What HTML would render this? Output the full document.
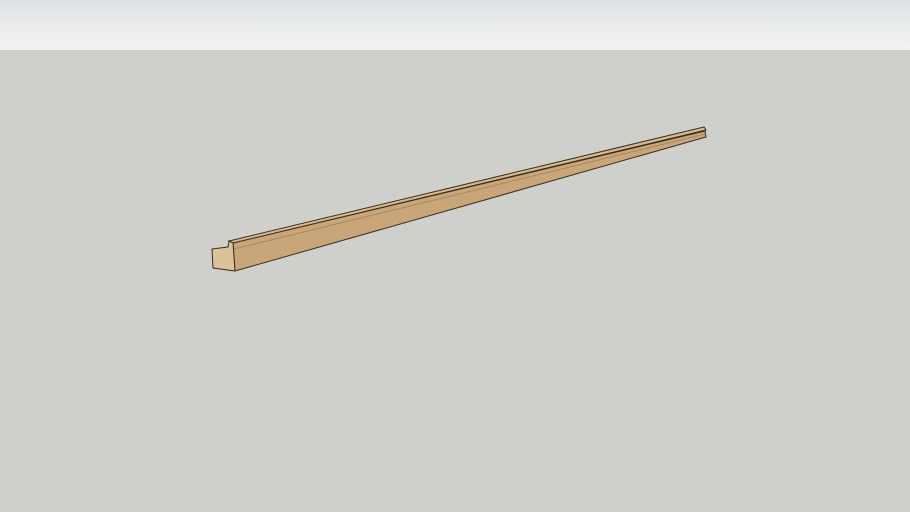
<html><body style="margin:0;width:910px;height:512px;overflow:hidden;background:#cfcfcb">
<div style="position:absolute;left:0;top:0;width:910px;height:50px;background:linear-gradient(#dfe2e4,#f2f3f4)"></div>
<svg width="910" height="512" style="position:absolute;left:0;top:0">
<polygon points="233,243 705,131 706,137 235,271" fill="#c9a57a" stroke="#3a3020" stroke-width="1"/>
<polyline points="234,249 705,134" stroke="#a88760" fill="none" stroke-width="1"/>
<polygon points="229,241 704,127 706,130 233,243" fill="#d9b98f" stroke="#3a3020" stroke-width="1"/>
<polygon points="212,249 228,247 229,241 233,243 235,271 213,268" fill="#dcc29a" stroke="#3a3020" stroke-width="1"/>
</svg>
</body></html>
